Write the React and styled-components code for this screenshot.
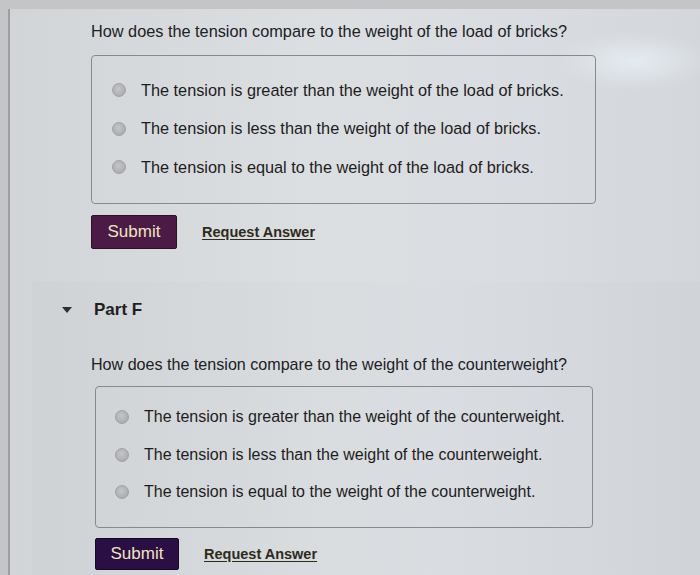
import React from "react";
import styled, { createGlobalStyle } from "styled-components";

const GlobalStyle = createGlobalStyle`
  html, body { margin: 0; padding: 0; }
  body {
    background: #c6c8ca;
    font-family: "Liberation Sans", Arial, sans-serif;
  }
  * { box-sizing: border-box; }
`;

const Screen = styled.div`
  width: 700px;
  height: 575px;
  overflow: hidden;
  display: flex;
  padding: 9px 0 0 8px;
  background: #c3c5c7;
`;

const Frame = styled.div`
  flex: 1;
  display: flex;
  flex-direction: column;
  border-left: 2px solid #9c9ea1;
  background:
    radial-gradient(ellipse 80px 30px at 625px 52px, rgba(232, 241, 248, 0.75), rgba(232, 241, 248, 0) 100%),
    linear-gradient(90deg, #d2d5d8 0%, #dcdfe2 45%, #d9dce0 75%, #d3d6da 100%);
`;

const PartBlock = styled.section`
  display: flex;
  flex-direction: column;
  align-items: flex-start;
  padding: 13px 0 0 81px;
`;

const PartPanel = styled.section`
  margin: 33px 0 0 22px;
  flex: 1;
  display: flex;
  flex-direction: column;
  align-items: flex-start;
  padding: 19px 0 0 0;
  background: linear-gradient(90deg, rgba(200, 204, 208, 0.35), rgba(214, 218, 222, 0.2) 60%, rgba(200, 204, 208, 0.3));
`;

const PartHeader = styled.div`
  display: flex;
  align-items: center;
  padding-left: 30px;
  gap: 22px;
  height: 18px;
`;

const Caret = styled.span`
  width: 0;
  height: 0;
  border-left: 5px solid transparent;
  border-right: 5px solid transparent;
  border-top: 6px solid #2e2f33;
`;

const PartTitle = styled.h3`
  margin: 0;
  font-size: 17px;
  line-height: 18px;
  font-weight: 700;
  color: #1f1f22;
`;

const Question = styled.p`
  margin: ${(p) => p.$margin};
  font-size: ${(p) => p.$size}px;
  line-height: 18px;
  color: #202124;
  white-space: nowrap;
`;

const ChoiceBox = styled.div`
  width: ${(p) => p.$width}px;
  margin-left: ${(p) => p.$shift || 0}px;
  border: 1.5px solid #86898d;
  border-radius: 4px;
  padding: ${(p) => p.$pad};
  display: flex;
  flex-direction: column;
`;

const Choice = styled.label`
  display: flex;
  align-items: center;
  height: ${(p) => p.$h}px;
  gap: 15px;
  font-size: ${(p) => p.$size}px;
  color: #1d1d20;
  white-space: nowrap;
  cursor: pointer;
`;

const Radio = styled.span`
  width: 14px;
  height: 14px;
  border-radius: 50%;
  flex: none;
  background: radial-gradient(circle at 45% 40%, #c4c6c9, #a8aaad 80%);
  border: 1px solid #a0a2a5;
`;

const Actions = styled.div`
  display: flex;
  align-items: center;
  gap: ${(p) => p.$gap}px;
  margin: ${(p) => p.$margin};
`;

const SubmitButton = styled.button`
  width: ${(p) => p.$w}px;
  height: ${(p) => p.$h}px;
  border: 1px solid ${(p) => p.$edge};
  border-radius: 2px;
  background: ${(p) => p.$bg};
  color: #efe5bf;
  font-family: inherit;
  font-size: 17px;
  padding: 0;
  cursor: pointer;
`;

const RequestLink = styled.a`
  font-size: 14.5px;
  font-weight: 700;
  color: #2e2a1c;
  text-decoration: underline;
  text-underline-offset: 2px;
  cursor: pointer;
`;

const loadChoices = [
  "The tension is greater than the weight of the load of bricks.",
  "The tension is less than the weight of the load of bricks.",
  "The tension is equal to the weight of the load of bricks.",
];

const counterChoices = [
  "The tension is greater than the weight of the counterweight.",
  "The tension is less than the weight of the counterweight.",
  "The tension is equal to the weight of the counterweight.",
];

export default function App() {
  return (
    <>
      <GlobalStyle />
      <Screen>
        <Frame>
          <PartBlock>
            <Question $size={16.3} $margin="0 0 15px 0">
              How does the tension compare to the weight of the load of bricks?
            </Question>
            <ChoiceBox $width={505} $pad="15px 0 16px 20px">
              {loadChoices.map((c) => (
                <Choice key={c} $h={38.5} $size={16.3}>
                  <Radio />
                  {c}
                </Choice>
              ))}
            </ChoiceBox>
            <Actions $gap={25} $margin="11px 0 0 0">
              <SubmitButton $w={86} $h={34} $bg="#4b1b46" $edge="#2c102b">
                Submit
              </SubmitButton>
              <RequestLink>Request Answer</RequestLink>
            </Actions>
          </PartBlock>

          <PartPanel>
            <PartHeader>
              <Caret />
              <PartTitle>Part F</PartTitle>
            </PartHeader>
            <Question $size={16.1} $margin="36px 0 13px 59px">
              How does the tension compare to the weight of the counterweight?
            </Question>
            <ChoiceBox $width={498} $shift={63} $pad="12px 0 16px 19px">
              {counterChoices.map((c) => (
                <Choice key={c} $h={37.5} $size={16}>
                  <Radio />
                  {c}
                </Choice>
              ))}
            </ChoiceBox>
            <Actions $gap={25} $margin="10px 0 0 63px">
              <SubmitButton $w={84} $h={32} $bg="#2a0f44" $edge="#170828">
                Submit
              </SubmitButton>
              <RequestLink>Request Answer</RequestLink>
            </Actions>
          </PartPanel>
        </Frame>
      </Screen>
    </>
  );
}
